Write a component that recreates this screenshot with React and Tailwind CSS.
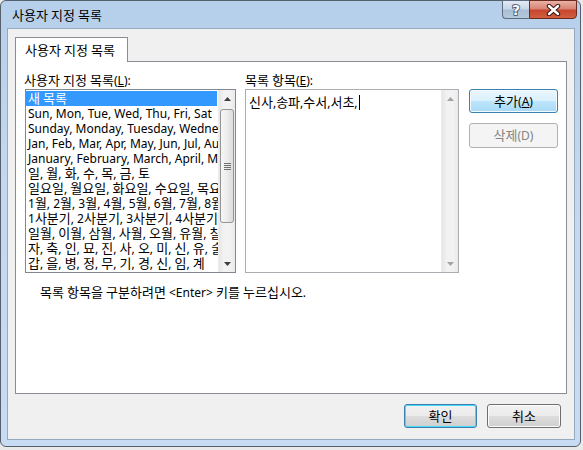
import React from "react";

const rows = [
  "새 목록",
  "Sun, Mon, Tue, Wed, Thu, Fri, Sat",
  "Sunday, Monday, Tuesday, Wednesday, Thursday, Friday, Saturday",
  "Jan, Feb, Mar, Apr, May, Jun, Jul, Aug, Sep, Oct, Nov, Dec",
  "January, February, March, April, May, June, July, August, September, October, November, December",
  "일, 월, 화, 수, 목, 금, 토",
  "일요일, 월요일, 화요일, 수요일, 목요일, 금요일, 토요일",
  "1월, 2월, 3월, 4월, 5월, 6월, 7월, 8월, 9월, 10월, 11월, 12월",
  "1사분기, 2사분기, 3사분기, 4사분기",
  "일월, 이월, 삼월, 사월, 오월, 유월, 칠월, 팔월, 구월, 시월, 십일월, 십이월",
  "자, 축, 인, 묘, 진, 사, 오, 미, 신, 유, 술, 해",
  "갑, 을, 병, 정, 무, 기, 경, 신, 임, 계",
];

// Korean runs are set slightly larger than Latin, as Malgun Gothic does.
function K({ children }) {
  const parts = String(children).split(/([\uAC00-\uD7A3]+)/);
  return (
    <>
      {parts.map((p, i) =>
        /[\uAC00-\uD7A3]/.test(p) ? (
          <span key={i} className="text-[13px]">
            {p}
          </span>
        ) : (
          <React.Fragment key={i}>{p}</React.Fragment>
        )
      )}
    </>
  );
}

function Arrow({ up, color }) {
  return (
    <svg width="7" height="4" viewBox="0 0 7 4">
      {up ? (
        <path d="M0 4 L3.5 0 L7 4 Z" fill={color} />
      ) : (
        <path d="M0 0 L3.5 4 L7 0 Z" fill={color} />
      )}
    </svg>
  );
}

function ScrollBar({ enabled }) {
  const c = enabled ? "#3f3f3f" : "#a3a3a3";
  return (
    <div className="w-[17px] h-full flex flex-col bg-[linear-gradient(to_right,#e6e6e6,#f2f2f2_30%,#f2f2f2_70%,#e9e9e9)] border-l border-[#ececec]">
      <div className="h-[17px] flex items-center justify-center">
        <Arrow up color={c} />
      </div>
      <div className="flex-1 px-[1px] pt-[2px]">
        {enabled && (
          <div className="h-[114px] rounded-[3px] border border-[#959595] bg-[linear-gradient(to_right,#f6f6f6,#ececec_50%,#dcdcdc)] flex items-center justify-center">
            <div className="flex flex-col gap-[1px]">
              <div className="w-[7px] h-px bg-[#6f6f6f]" />
              <div className="w-[7px] h-px bg-[#6f6f6f]" />
              <div className="w-[7px] h-px bg-[#6f6f6f]" />
              <div className="w-[7px] h-px bg-[#6f6f6f]" />
            </div>
          </div>
        )}
      </div>
      <div className="h-[17px] flex items-center justify-center">
        <Arrow color={c} />
      </div>
    </div>
  );
}

const grayGrad =
  "bg-[linear-gradient(to_bottom,#f2f2f2_0%,#ebebeb_50%,#dddddd_51%,#cfcfcf_100%)]";

function Btn({ children, kind }) {
  const base =
    "h-[24px] rounded-[3px] border flex items-center justify-center text-[12px] leading-[16px]";
  if (kind === "blue")
    return (
      <div
        className={`${base} w-[89px] border-[#3c7fb1] text-black bg-[linear-gradient(to_bottom,#eaf6fd_0%,#d9f0fc_50%,#bee6fd_51%,#a7d9f5_100%)] shadow-[inset_0_0_0_1px_#f4fbff]`}
      >
        {children}
      </div>
    );
  if (kind === "disabled")
    return (
      <div className={`${base} w-[89px] h-[25px] border-[#adb2b5] text-[#838383] bg-[#f4f4f4]`}>
        {children}
      </div>
    );
  if (kind === "default")
    return (
      <div
        className={`${base} w-[73px] border-[#3c7fb1] ${grayGrad} shadow-[inset_0_0_0_1px_#48d8fb]`}
      >
        {children}
      </div>
    );
  return (
    <div
      className={`${base} w-[74px] border-[#707070] ${grayGrad} shadow-[inset_0_0_0_1px_#fcfcfc]`}
    >
      {children}
    </div>
  );
}

export default function App() {
  return (
    <div className="w-[583px] h-[450px] bg-[#e9e9e9] overflow-hidden font-['Noto_Sans','Noto_Sans_CJK_KR',sans-serif] text-black">
      <div className="w-[581px] h-[447px] rounded-[6px] border border-[#56606c] bg-[linear-gradient(to_bottom,#b6cfea,#c3d8f0_40%,#c7dcf2)] flex flex-col">
        {/* title bar */}
        <div className="h-[27px] flex items-start justify-between">
          <div className="pl-[11px] pt-[6px] text-[12px] leading-[16px]">
            <K>사용자 지정 목록</K>
          </div>
          <div className="flex mr-[3px] -mt-px">
            <div className="w-[27px] h-[19px] rounded-bl-[4px] border border-r-0 border-[#5c6d80] bg-[linear-gradient(to_bottom,#e2ebf5,#c9d7e7_45%,#a9bdd4_55%,#b5c9de)] flex items-center justify-center">
              <svg width="12" height="15" viewBox="0 0 12 15">
                <text
                  x="6"
                  y="12.5"
                  textAnchor="middle"
                  fontSize="14"
                  fontWeight="bold"
                  fontFamily="DejaVu Sans, sans-serif"
                  fill="#ffffff"
                  stroke="#3d4c5e"
                  strokeWidth="1.6"
                  paintOrder="stroke"
                >
                  ?
                </text>
              </svg>
            </div>
            <div className="w-[48px] h-[19px] rounded-br-[4px] border border-[#6a2a20] bg-[linear-gradient(to_bottom,#eab2a6,#d98474_45%,#c8452f_55%,#d0603e)] flex items-center justify-center">
              <svg width="15" height="12" viewBox="0 0 15 12">
                <path d="M3 2 L12 10 M12 2 L3 10" stroke="#3b1610" strokeWidth="4.4" strokeLinecap="round" />
                <path d="M3 2 L12 10 M12 2 L3 10" stroke="#ffffff" strokeWidth="2.4" strokeLinecap="round" />
              </svg>
            </div>
          </div>
        </div>

        {/* client area */}
        <div className="ml-[6px] mr-[5px] mb-[6px] flex-1 bg-[#f0f0f0] border border-[#97a9bf] flex flex-col px-[7px] pt-[8px]">
          {/* tab header */}
          <div className="flex">
            <div className="relative z-10 -mb-px w-[113px] h-[25px] bg-white border border-b-0 border-[#898c95] pl-[9px] pt-[4px] text-[12px] leading-[16px] whitespace-nowrap">
              <K>사용자 지정 목록</K>
            </div>
          </div>
          {/* tab panel */}
          <div className="h-[333px] bg-white border border-[#898c95] pl-[9px] pt-[10px] flex flex-col">
            <div className="flex">
              {/* left column */}
              <div className="w-[211px] flex flex-col">
                <div className="h-[17px] text-[12px] leading-[16px] -ml-px whitespace-nowrap">
                  <K>사용자 지정 목록</K>(<span className="underline underline-offset-[1px]">L</span>):
                </div>
                <div className="h-[184px] border border-[#828790] bg-white flex">
                  <div className="flex-1 min-w-0 pt-px overflow-hidden">
                    {rows.map((r, i) => (
                      <div
                        key={i}
                        className={`h-[15px] leading-[15px] text-[12px] whitespace-nowrap overflow-hidden pl-[2px] ${
                          i === 0 ? "bg-[#3399ff] text-white mr-px" : ""
                        }`}
                      >
                        <K>{r}</K>
                      </div>
                    ))}
                  </div>
                  <ScrollBar enabled />
                </div>
              </div>
              {/* middle column */}
              <div className="w-[214px] ml-[9px] flex flex-col">
                <div className="h-[17px] text-[12px] leading-[16px] whitespace-nowrap">
                  <K>목록 항목</K>(<span className="underline underline-offset-[1px]">E</span>):
                </div>
                <div className="h-[184px] border border-[#abadb3] bg-white flex">
                  <div className="flex-1 min-w-0 pl-[3px] pt-[4px] text-[12px] leading-[16px] flex items-start whitespace-nowrap">
                    <span>
                      <K>신사,송파,수서,서초,</K>
                    </span>
                    <span className="w-px h-[15px] bg-black ml-px mt-[1px]" />
                  </div>
                  <ScrollBar enabled={false} />
                </div>
              </div>
              {/* buttons column */}
              <div className="ml-[10px] pt-[17px] flex flex-col gap-[10px]">
                <Btn kind="blue">
                  <span>
                    <K>추가</K>(<span className="underline underline-offset-[1px]">A</span>)
                  </span>
                </Btn>
                <Btn kind="disabled">
                  <span>
                    <K>삭제</K>(D)
                  </span>
                </Btn>
              </div>
            </div>
            <div className="mt-[11px] ml-[15px] text-[12px] leading-[16px] whitespace-nowrap">
              <K>목록 항목을 구분하려면 &lt;Enter&gt; 키를 누르십시오.</K>
            </div>
          </div>
          {/* bottom buttons */}
          <div className="mt-[10px] flex justify-end gap-[10px] pr-[6px]">
            <Btn kind="default">
              <K>확인</K>
            </Btn>
            <Btn>
              <K>취소</K>
            </Btn>
          </div>
        </div>
      </div>
    </div>
  );
}
